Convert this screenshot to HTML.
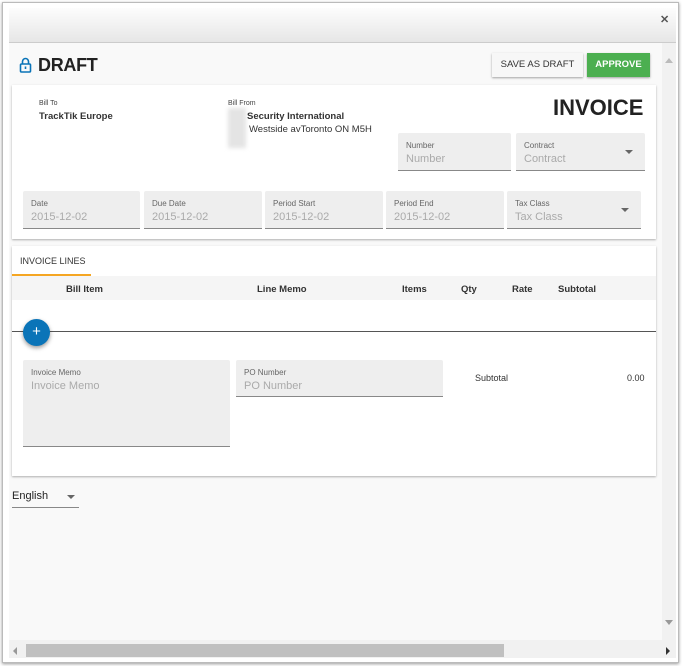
<!DOCTYPE html>
<html><head><style>
*{box-sizing:border-box;margin:0;padding:0}
body{width:682px;height:666px;background:#fff;font-family:"Liberation Sans",sans-serif;position:relative;overflow:hidden;color:#222}
.abs{position:absolute}
.win{left:2px;top:2px;width:677px;height:661px;border:1px solid #bbb;box-shadow:0 1px 3px rgba(0,0,0,.4);background:#fff}
.hdr{left:9px;top:8px;width:667px;height:35px;background:linear-gradient(#fdfdfd,#e6e6e6);border-bottom:1px solid #ccc}
.content{left:9px;top:43px;width:653px;height:597px;background:#f9f9f9}
.vs{left:662px;top:43px;width:14px;height:597px;background:#f1f1f1}
.hs{left:9px;top:640px;width:667px;height:18px;background:#f1f1f1}
.card{background:#fff;box-shadow:0 1px 2px rgba(0,0,0,.3)}
.fld{background:#eee;border-bottom:1px solid #888;border-radius:2px 2px 0 0}
.fld .l{position:absolute;left:8px;top:8px;font-size:8px;color:#666}
.fld .v{position:absolute;left:8px;top:20px;font-size:11px;color:#aaa}
.arr{position:absolute;width:0;height:0;border-left:4px solid transparent;border-right:4px solid transparent;border-top:4px solid #666}
.th{font-size:9.5px;font-weight:bold;color:#333;top:284px}
</style></head><body>
<div class="abs win"></div>
<div class="abs hdr"></div>
<div class="abs" style="left:660px;top:13px;font-size:11px;color:#555;font-weight:bold">✕</div>
<div class="abs content"></div>
<div class="abs vs"></div>
<div class="abs" style="left:665px;top:58px;border-left:4px solid transparent;border-right:4px solid transparent;border-bottom:5px solid #bbb"></div>
<div class="abs" style="left:665px;top:620px;border-left:4px solid transparent;border-right:4px solid transparent;border-top:5px solid #999"></div>
<div class="abs hs"></div>
<div class="abs" style="left:26px;top:644px;width:478px;height:13px;background:#c0c0c0"></div>
<div class="abs" style="left:13px;top:647px;border-top:4px solid transparent;border-bottom:4px solid transparent;border-right:4px solid #999"></div>
<div class="abs" style="left:666px;top:647px;border-top:4px solid transparent;border-bottom:4px solid transparent;border-left:4px solid #333"></div>

<svg class="abs" style="left:19px;top:57px" width="13" height="16" viewBox="0 0 13 16"><path d="M3.5 7V4.5a3 3 0 0 1 6 0V7" fill="none" stroke="#0a74b8" stroke-width="1.6"/><rect x="1.5" y="7" width="10" height="8" rx="1" fill="none" stroke="#0a74b8" stroke-width="1.6"/><rect x="5.7" y="9.5" width="1.6" height="2.5" fill="#0a74b8"/></svg>
<div class="abs" style="left:38px;top:55px;font-size:18px;font-weight:bold;color:#222;letter-spacing:-0.3px">DRAFT</div>
<div class="abs" style="left:492px;top:53px;width:91px;height:24px;background:#f7f7f7;box-shadow:0 1px 2px rgba(0,0,0,.35);font-size:9.5px;color:#333;text-align:center;line-height:24px">SAVE AS DRAFT</div>
<div class="abs" style="left:587px;top:53px;width:63px;height:24px;background:#4caf50;box-shadow:0 1px 2px rgba(0,0,0,.35);font-size:9.5px;color:#fff;font-weight:bold;text-align:center;line-height:24px">APPROVE</div>

<div class="abs card" style="left:12px;top:85px;width:644px;height:154px"></div>
<div class="abs" style="left:39px;top:100px;font-size:7px;color:#444">Bill To</div>
<div class="abs" style="left:39px;top:111px;font-size:9.5px;font-weight:bold;color:#333">TrackTik Europe</div>
<div class="abs" style="left:228px;top:100px;font-size:7px;color:#444">Bill From</div>
<div class="abs" style="left:228px;top:108px;width:18px;height:40px;background:#e4e4e4;filter:blur(2px)"></div>
<div class="abs" style="left:247px;top:111px;font-size:9.5px;font-weight:bold;color:#333">Security International</div>
<div class="abs" style="left:249px;top:124px;font-size:9.5px;color:#333">Westside avToronto ON M5H</div>
<div class="abs" style="left:553px;top:95px;font-size:22px;font-weight:bold;color:#222">INVOICE</div>
<div class="abs fld" style="left:398px;top:133px;width:113px;height:38px"><span class="l">Number</span><span class="v">Number</span></div>
<div class="abs fld" style="left:516px;top:133px;width:129px;height:38px"><span class="l">Contract</span><span class="v">Contract</span><i class="arr" style="left:109px;top:17px"></i></div>
<div class="abs fld" style="left:23px;top:191px;width:117px;height:38px"><span class="l">Date</span><span class="v">2015-12-02</span></div>
<div class="abs fld" style="left:144px;top:191px;width:118px;height:38px"><span class="l">Due Date</span><span class="v">2015-12-02</span></div>
<div class="abs fld" style="left:265px;top:191px;width:118px;height:38px"><span class="l">Period Start</span><span class="v">2015-12-02</span></div>
<div class="abs fld" style="left:386px;top:191px;width:118px;height:38px"><span class="l">Period End</span><span class="v">2015-12-02</span></div>
<div class="abs fld" style="left:507px;top:191px;width:134px;height:38px"><span class="l">Tax Class</span><span class="v">Tax Class</span><i class="arr" style="left:114px;top:17px"></i></div>

<div class="abs card" style="left:12px;top:246px;width:644px;height:230px"></div>
<div class="abs" style="left:20px;top:256px;font-size:9px;color:#333">INVOICE LINES</div>
<div class="abs" style="left:12px;top:274px;width:79px;height:2px;background:#f5a623"></div>
<div class="abs" style="left:12px;top:276px;width:644px;height:24px;background:#f5f5f5"></div>
<div class="abs th" style="left:66px">Bill Item</div>
<div class="abs th" style="left:257px">Line Memo</div>
<div class="abs th" style="left:402px">Items</div>
<div class="abs th" style="left:461px">Qty</div>
<div class="abs th" style="left:512px">Rate</div>
<div class="abs th" style="left:558px">Subtotal</div>
<div class="abs" style="left:12px;top:331px;width:644px;height:1px;background:#555"></div>
<div class="abs" style="left:23px;top:319px;width:27px;height:27px;border-radius:50%;background:#0a74b8;box-shadow:0 2px 4px rgba(0,0,0,.4);color:#fff;font-size:15px;text-align:center;line-height:26px">+</div>
<div class="abs fld" style="left:23px;top:360px;width:207px;height:87px"><span class="l">Invoice Memo</span><span class="v">Invoice Memo</span></div>
<div class="abs fld" style="left:236px;top:360px;width:207px;height:37px"><span class="l">PO Number</span><span class="v">PO Number</span></div>
<div class="abs" style="left:475px;top:373px;font-size:9px;color:#333">Subtotal</div>
<div class="abs" style="left:627px;top:373px;font-size:9px;color:#333">0.00</div>
<div class="abs" style="left:12px;top:490px;font-size:11px;color:#222">English</div>
<i class="arr" style="left:67px;top:495px"></i>
<div class="abs" style="left:12px;top:507px;width:67px;height:1px;background:#888"></div>
</body></html>
